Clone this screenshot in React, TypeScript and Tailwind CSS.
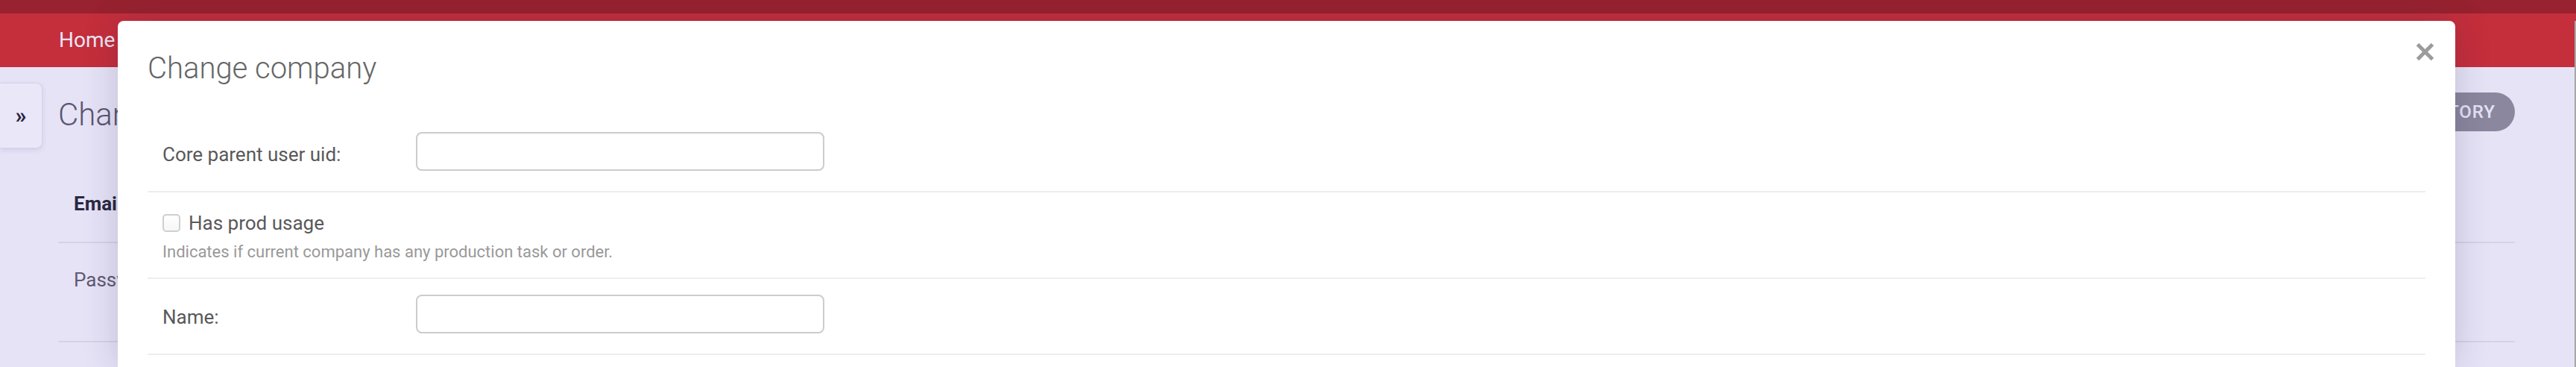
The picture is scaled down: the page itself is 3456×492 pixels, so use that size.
import React from "react";

function FieldRow({ label }: { label: string }) {
  return (
    <div className="flex items-start border-b-2 border-[#eeeeee] pl-[20px] pt-[21px] pb-[27px]">
      <label className="mt-[15px] w-[340px] shrink-0 text-[26px] leading-[30px] text-[#595959]">{label}</label>
      <input
        type="text"
        className="h-[52px] w-[548px] rounded-[8px] border-2 border-[#cccccc] bg-white outline-none"
      />
    </div>
  );
}

export default function App() {
  return (
    <div
      className="relative h-[492px] w-[3456px] overflow-hidden bg-[#e6e3f7]"
      style={{ fontFamily: "Roboto, 'Liberation Sans', sans-serif" }}
    >
      {/* Top navigation */}
      <header>
        <div className="h-[18px] bg-[#98222f]" />
        <div className="flex h-[72px] items-center bg-[#c52e3b] pl-[79px]">
          <span className="text-[28px] leading-[28px] text-[#ebe6f7]">Home</span>
        </div>
      </header>

      {/* Page behind the modal */}
      <div className="flex">
        <div className="mt-[21px] flex h-[88px] w-[57px] shrink-0 items-center justify-center rounded-r-[8px] border border-l-0 border-[#d6d3e8] bg-[#e9e7f8] shadow-[0_2px_6px_rgba(60,50,100,0.12)]">
          <span className="text-[30px] font-bold leading-none text-[#2a2640]">»</span>
        </div>
        <div className="flex-1 pl-[21px] pr-[82px]">
          <div className="mt-[34px] flex items-start justify-between">
            <h1 className="mt-[4px] text-[42px] font-light leading-[52px] text-[#5b5670]">Change company</h1>
            <button className="h-[52px] rounded-full bg-[#8b879f] pl-[26px] pr-[26px] text-[24px] font-medium tracking-[1px] text-[#e6e3f5]">
              HISTORY
            </button>
          </div>
          <div className="mt-[44px]">
            <div className="border-b-2 border-[#d5d1e7] pl-[21px] pt-[34px] pb-[35px]">
              <span className="text-[26px] font-bold leading-[30px] text-[#2b2840]">Email</span>
            </div>
            <div className="border-b-2 border-[#d5d1e7] pl-[21px] pt-[34px] pb-[66px]">
              <span className="text-[26px] leading-[30px] text-[#5f5a72]">Password</span>
            </div>
          </div>
        </div>
      </div>

      {/* Scrollbar edge */}
      <div className="absolute right-0 top-[28px] bottom-0 w-[2px] bg-[#a8a8a8]" />

      {/* Modal */}
      <div className="absolute left-[158px] top-[28px] bottom-0 w-[3136px] rounded-t-[8px] bg-white px-[40px] pt-[40px] shadow-[0_0_48px_rgba(40,30,70,0.2)]">
        <button className="absolute right-[28px] top-[29px] h-[25px] w-[25px]" aria-label="Close">
          <svg viewBox="0 0 25 25" width="25" height="25">
            <path d="M2.5 2.5 L22.5 22.5 M22.5 2.5 L2.5 22.5" stroke="#9b9b9b" strokeWidth="5" />
          </svg>
        </button>
        <h2 className="text-[40px] font-light leading-[48px] text-[#666666]">Change company</h2>

        <div className="mt-[40px]">
          <FieldRow label="Core parent user uid:" />

          <div className="border-b-2 border-[#eeeeee] pl-[20px] pt-[26px] pb-[21px]">
            <div className="flex items-center">
              <span className="mr-[11px] h-[24px] w-[24px] rounded-[5px] border-2 border-[#cfcfcf] bg-gradient-to-b from-white to-[#f6f6f6]" />
              <label className="text-[26px] leading-[30px] text-[#595959]">Has prod usage</label>
            </div>
            <p className="mt-[11px] text-[22px] leading-[26px] text-[#999999]">
              Indicates if current company has any production task or order.
            </p>
          </div>

          <FieldRow label="Name:" />
          <FieldRow label="Slug:" />
        </div>
      </div>
    </div>
  );
}
